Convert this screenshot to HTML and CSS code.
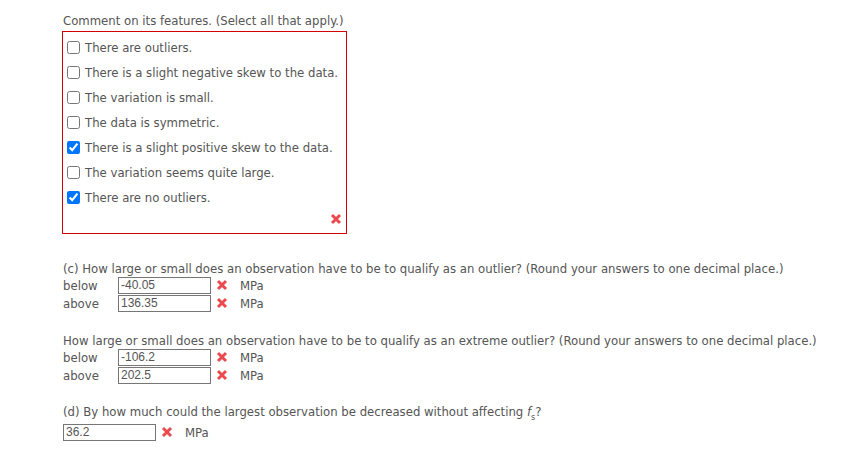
FILE: index.html
```html
<!DOCTYPE html>
<html>
<head>
<meta charset="utf-8">
<link rel="stylesheet" href="styles.css">
</head>
<body>
<div class="page">
  <div class="prompt">Comment on its features. (Select all that apply.)</div>
  <div class="choices">
    <label class="choice"><input type="checkbox"><span>There are outliers.</span></label>
    <label class="choice"><input type="checkbox"><span>There is a slight negative skew to the data.</span></label>
    <label class="choice"><input type="checkbox"><span>The variation is small.</span></label>
    <label class="choice"><input type="checkbox"><span>The data is symmetric.</span></label>
    <label class="choice"><input type="checkbox" checked><span>There is a slight positive skew to the data.</span></label>
    <label class="choice"><input type="checkbox"><span>The variation seems quite large.</span></label>
    <label class="choice"><input type="checkbox" checked><span>There are no outliers.</span></label>
    <div class="choice-mark">
      <svg class="xmark" viewBox="0 0 12 12" width="12" height="12"><path d="M2 2L10 10M10 2L2 10"/></svg>
    </div>
  </div>

  <div class="section sec-c">
    <div class="question">(c) How large or small does an observation have to be to qualify as an outlier? (Round your answers to one decimal place.)</div>
    <div class="answer-row"><span class="lbl">below</span><input class="field" type="text" value="-40.05"><svg class="xmark" viewBox="0 0 12 12" width="12" height="12"><path d="M2 2L10 10M10 2L2 10"/></svg><span class="unit">MPa</span></div>
    <div class="answer-row"><span class="lbl">above</span><input class="field" type="text" value="136.35"><svg class="xmark" viewBox="0 0 12 12" width="12" height="12"><path d="M2 2L10 10M10 2L2 10"/></svg><span class="unit">MPa</span></div>
  </div>

  <div class="section sec-e">
    <div class="question">How large or small does an observation have to be to qualify as an extreme outlier? (Round your answers to one decimal place.)</div>
    <div class="answer-row"><span class="lbl">below</span><input class="field" type="text" value="-106.2"><svg class="xmark" viewBox="0 0 12 12" width="12" height="12"><path d="M2 2L10 10M10 2L2 10"/></svg><span class="unit">MPa</span></div>
    <div class="answer-row"><span class="lbl">above</span><input class="field" type="text" value="202.5"><svg class="xmark" viewBox="0 0 12 12" width="12" height="12"><path d="M2 2L10 10M10 2L2 10"/></svg><span class="unit">MPa</span></div>
  </div>

  <div class="section sec-d">
    <div class="question">(d) By how much could the largest observation be decreased without affecting <i>f</i><sub>s</sub>?</div>
    <div class="answer-row d-row"><input class="field" type="text" value="36.2"><svg class="xmark" viewBox="0 0 12 12" width="12" height="12"><path d="M2 2L10 10M10 2L2 10"/></svg><span class="unit">MPa</span></div>
  </div>
</div>
</body>
</html>
```

FILE: styles.css
```css
html, body {
  margin: 0;
  padding: 0;
  background: #ffffff;
}

.page {
  padding: 13px 0 0 62px;
  font-family: "DejaVu Sans", "Liberation Sans", sans-serif;
  font-stretch: condensed;
  font-size: 13px;
  color: #555555;
}

.prompt {
  line-height: 16px;
  padding-left: 1px;
  margin-bottom: 2px;
}

.choices {
  width: 283px;
  border: 1px solid #d40000;
  padding: 3px 0 6px 0;
}

.choice {
  display: flex;
  align-items: center;
  height: 25px;
}

.choice input {
  width: 13px;
  height: 13px;
  margin: 0 5px 0 4px;
}

.choice-mark {
  display: flex;
  justify-content: flex-end;
  padding: 3px 4px 0 0;
  height: 14px;
}

.xmark {
  display: block;
  flex: none;
}

.xmark path {
  stroke: #ec4a4f;
  stroke-width: 3;
  stroke-linecap: butt;
  fill: none;
}

.section {
  padding-left: 1px;
}

.sec-c {
  margin-top: 28px;
}

.sec-e {
  margin-top: 22px;
}

.sec-d {
  margin-top: 21px;
}

.question {
  line-height: 14px;
}

.question sub {
  font-size: 9px;
  line-height: 0;
}

.answer-row {
  display: flex;
  align-items: center;
  height: 18px;
}

.lbl {
  width: 55px;
  flex: none;
}

.field {
  box-sizing: border-box;
  width: 93px;
  height: 17px;
  margin: 0;
  padding: 0 2px;
  border: 1px solid #767676;
  border-radius: 0;
  font-family: "Liberation Sans", Arial, sans-serif;
  font-size: 12px;
  color: #555555;
  background: #ffffff;
  outline: none;
}

.answer-row .xmark {
  margin-left: 5px;
}

.unit {
  margin-left: 12px;
}

.d-row {
  margin-top: 4px;
}
```
